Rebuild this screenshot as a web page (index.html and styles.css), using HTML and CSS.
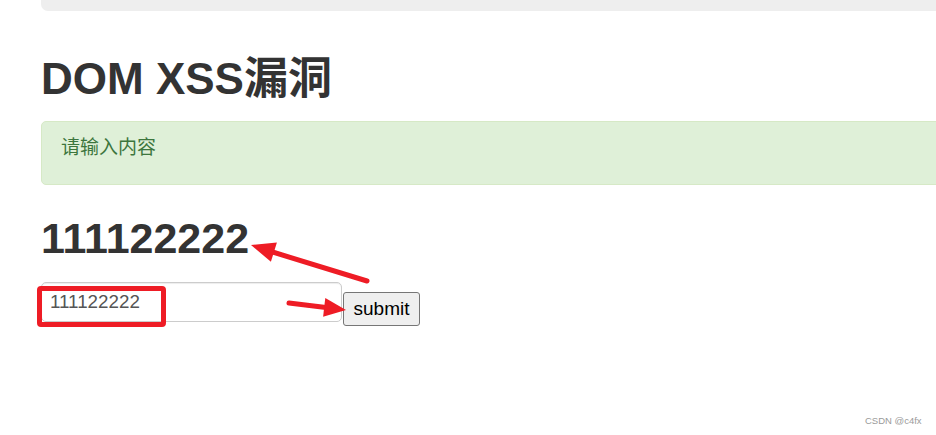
FILE: index.html
```html
<!DOCTYPE html>
<html lang="zh-CN">
<head>
<meta charset="utf-8">
<title>DOM XSS漏洞</title>
<link rel="stylesheet" href="styles.css">
</head>
<body>
<div class="page">
  <div class="container">
    <div class="topbar"></div>
    <h1 class="title">DOM XSS漏洞</h1>
    <div class="alert">请输入内容</div>
    <h2 class="output">111122222</h2>
    <form class="form-row">
      <input class="text-input" type="text" value="111122222">
      <button class="submit-btn" type="button">submit</button>
    </form>
  </div>
  <div class="mark-box"></div>
  <svg class="arrows" width="936" height="435" viewBox="0 0 936 435">
    <line x1="367" y1="281" x2="266" y2="250" stroke="#ee1c25" stroke-width="5" stroke-linecap="round"/>
    <polygon points="251,245 276.9,242.6 270.9,261.7" fill="#ee1c25"/>
    <line x1="289" y1="303" x2="330" y2="308" stroke="#ee1c25" stroke-width="5" stroke-linecap="round"/>
    <polygon points="346,310 325.3,298 323.1,316.8" fill="#ee1c25"/>
  </svg>
  <div class="watermark">CSDN @c4fx</div>
</div>
</body>
</html>
```
FILE: styles.css
```css
html, body {
  margin: 0;
  padding: 0;
  overflow: hidden;
  background: #fff;
}
.page {
  position: relative;
  width: 936px;
  height: 435px;
  overflow: hidden;
  font-family: "Liberation Sans", "Noto Sans CJK SC", sans-serif;
  color: #333;
}
.container {
  padding-left: 41px;
  width: 1000px;
}
.topbar {
  height: 11px;
  background: #eeeeee;
  border-bottom-left-radius: 7px;
}
.title {
  margin: 43.5px 0 0 0;
  font-size: 44px;
  line-height: 1.1;
  font-weight: bold;
  color: #333;
}
.alert {
  margin-top: 18px;
  height: 36px;
  padding: 13px 19px 13px 19px;
  background: #dff0d8;
  border: 1px solid #d6e9c6;
  border-radius: 5px;
  color: #3c763d;
  font-size: 19px;
  line-height: 26px;
}
.output {
  margin: 30px 0 0 0;
  font-size: 43px;
  line-height: 1.1;
  font-weight: bold;
  color: #333;
}
.form-row {
  display: flex;
  align-items: flex-start;
  margin: 19.5px 0 0 0;
}
.text-input {
  box-sizing: border-box;
  width: 301px;
  height: 40px;
  margin: 0;
  padding: 0 8px;
  border: 1px solid #cccccc;
  border-radius: 5px;
  box-shadow: inset 0 1px 1px rgba(0,0,0,0.075);
  font-family: "Liberation Sans", sans-serif;
  font-size: 18.8px;
  color: #555;
  outline: none;
}
.submit-btn {
  box-sizing: border-box;
  width: 77px;
  height: 34px;
  margin: 10px 0 0 1px;
  padding: 0;
  background: #efefef;
  border: 1px solid #767676;
  border-radius: 3px;
  font-family: "Liberation Sans", sans-serif;
  font-size: 19px;
  color: #000;
}
.mark-box {
  position: absolute;
  left: 37px;
  top: 286px;
  width: 119px;
  height: 31px;
  border: 5px solid #ee1c25;
  border-radius: 4px;
}
.arrows {
  position: absolute;
  left: 0;
  top: 0;
}
.watermark {
  position: absolute;
  left: 865px;
  top: 415px;
  font-size: 9.5px;
  color: #9a9a9a;
  font-family: "Liberation Sans", sans-serif;
}
```
